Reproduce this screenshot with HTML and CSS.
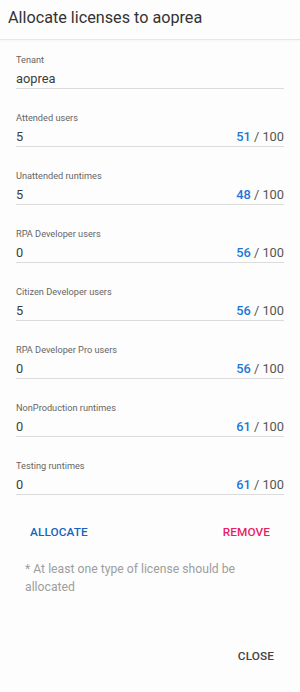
FILE: index.html
```html
<!DOCTYPE html>
<html lang="en">
<head>
  <meta charset="UTF-8">
  <meta name="viewport" content="width=device-width, initial-scale=1.0">
  <title>Allocate licenses</title>
  <link rel="stylesheet" href="styles.css">
</head>
<body>
  <div class="dialog">
    <div class="dialog-title">Allocate licenses to aoprea</div>

    <div class="dialog-content">
      <div class="field">
        <div class="field-label">Tenant</div>
        <div class="field-row">
          <span class="field-value">aoprea</span>
        </div>
      </div>

      <div class="field">
        <div class="field-label">Attended users</div>
        <div class="field-row">
          <span class="field-value">5</span>
          <span class="field-count"><b>51</b> / 100</span>
        </div>
      </div>

      <div class="field">
        <div class="field-label">Unattended runtimes</div>
        <div class="field-row">
          <span class="field-value">5</span>
          <span class="field-count"><b>48</b> / 100</span>
        </div>
      </div>

      <div class="field">
        <div class="field-label">RPA Developer users</div>
        <div class="field-row">
          <span class="field-value">0</span>
          <span class="field-count"><b>56</b> / 100</span>
        </div>
      </div>

      <div class="field">
        <div class="field-label">Citizen Developer users</div>
        <div class="field-row">
          <span class="field-value">5</span>
          <span class="field-count"><b>56</b> / 100</span>
        </div>
      </div>

      <div class="field">
        <div class="field-label">RPA Developer Pro users</div>
        <div class="field-row">
          <span class="field-value">0</span>
          <span class="field-count"><b>56</b> / 100</span>
        </div>
      </div>

      <div class="field">
        <div class="field-label">NonProduction runtimes</div>
        <div class="field-row">
          <span class="field-value">0</span>
          <span class="field-count"><b>61</b> / 100</span>
        </div>
      </div>

      <div class="field">
        <div class="field-label">Testing runtimes</div>
        <div class="field-row">
          <span class="field-value">0</span>
          <span class="field-count"><b>61</b> / 100</span>
        </div>
      </div>

      <div class="button-row">
        <a href="#" class="btn btn-allocate">ALLOCATE</a>
        <a href="#" class="btn btn-remove">REMOVE</a>
      </div>

      <div class="note">* At least one type of license should be allocated</div>
    </div>

    <div class="dialog-actions">
      <a href="#" class="btn btn-close">CLOSE</a>
    </div>
  </div>
</body>
</html>
```

FILE: styles.css
```css
* {
  margin: 0;
  padding: 0;
  box-sizing: border-box;
}

body {
  font-family: Roboto, "Liberation Sans", sans-serif;
  background-color: #fdfdfd;
  color: #333;
  width: 300px;
  height: 692px;
  overflow: hidden;
}

.dialog {
  display: flex;
  flex-direction: column;
  height: 100%;
}

.dialog-title {
  height: 40px;
  padding: 6px 8px 0;
  font-size: 16.2px;
  color: #333;
  line-height: 24px;
  border-bottom: 1px solid #e6e6e6;
  box-shadow: 0 1px 2px rgba(0, 0, 0, 0.04);
}

.dialog-content {
  display: flex;
  flex-direction: column;
  gap: 22px;
  padding: 13px 16px 0;
}

.field {
  display: flex;
  flex-direction: column;
}

.field-label {
  font-size: 9.2px;
  line-height: 14px;
  color: #666;
}

.field-row {
  display: flex;
  justify-content: space-between;
  align-items: center;
  height: 22px;
  padding-top: 2px;
  border-bottom: 1px solid #dcdcdc;
  font-size: 12.8px;
  line-height: 20px;
}

.field-value {
  color: #3c3c3c;
}

.field-count {
  color: #555;
}

.field-count b {
  color: #1e77d8;
  font-weight: 500;
}

.button-row {
  display: flex;
  justify-content: space-between;
  margin-top: -3px;
}

.btn {
  display: flex;
  align-items: center;
  height: 36px;
  padding: 0 14px;
  text-decoration: none;
  font-size: 11.8px;
  font-weight: 500;
  letter-spacing: 0.1px;
}

.btn-allocate {
  color: #1565c0;
}

.btn-remove {
  color: #e91e63;
  padding-right: 14px;
}

.note {
  margin-top: -12px;
  padding: 0 9px;
  font-size: 12.2px;
  line-height: 18px;
  color: #9e9e9e;
}

.dialog-actions {
  display: flex;
  justify-content: flex-end;
  margin-top: 42px;
  padding: 0 12px;
}

.btn-close {
  color: #444;
  padding: 0 14px;
}
```
